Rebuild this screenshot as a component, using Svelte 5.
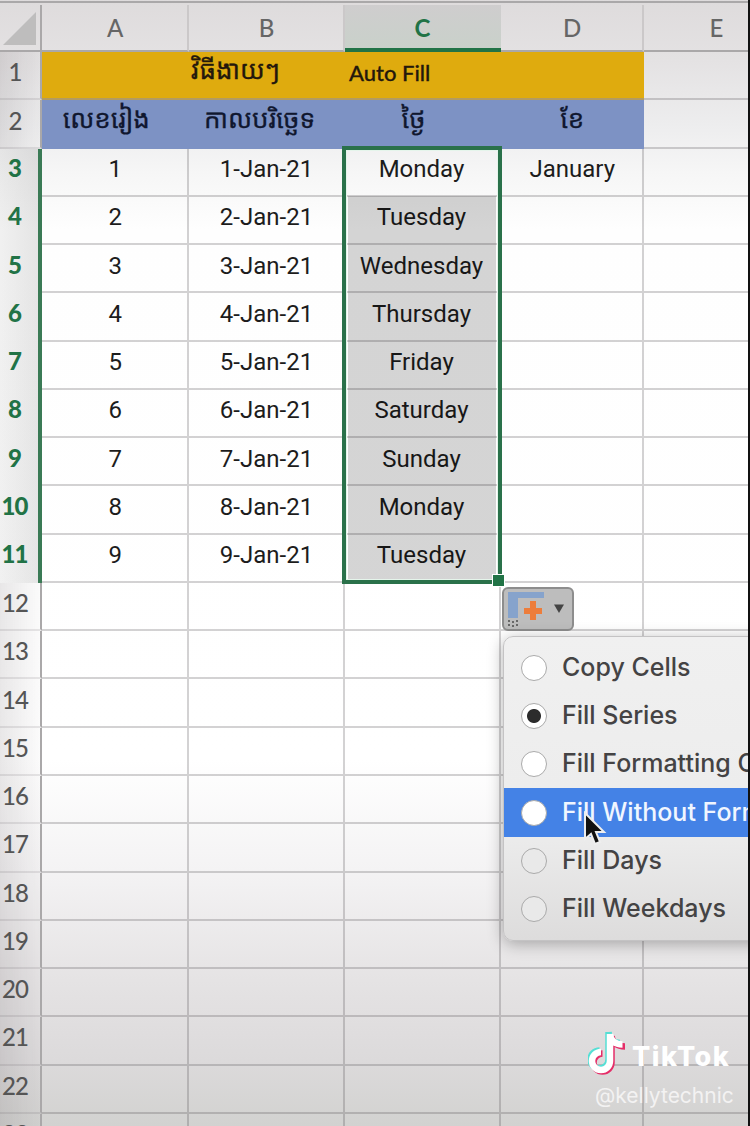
<script lang="ts">
  const columns = ['A', 'B', 'C', 'D', 'E'];
  const days = [
    'Monday',
    'Tuesday',
    'Wednesday',
    'Thursday',
    'Friday',
    'Saturday',
    'Sunday',
    'Monday',
    'Tuesday'
  ];
  const headings = ['លេខរៀង', 'កាលបរិច្ឆេទ', 'ថ្ងៃ', 'ខែ'];

  // rows 3 to 23, the last one is cut off by the window
  const rows = Array.from({ length: 21 }, (_, i) => ({
    number: i + 3,
    selected: i < 9,
    cells: i < 9 ? [`${i + 1}`, `${i + 1}-Jan-21`, days[i], i === 0 ? 'January' : ''] : ['', '', '', '']
  }));

  const options = [
    'Copy Cells',
    'Fill Series',
    'Fill Formatting Only',
    'Fill Without Formatting',
    'Fill Days',
    'Fill Weekdays'
  ];
  let chosen = $state('Fill Series');
  let hovered = $state('Fill Without Formatting');
</script>

<main class="window">
  <div class="sheet">
    <div class="row head">
      <div class="corner">
        <svg width="34" height="34" viewBox="0 0 34 34"><path d="M34 0V33H1Z" fill="#bebdbd" /></svg>
      </div>
      {#each columns as column}
        <div class="column" class:active={column === 'C'}>{column}</div>
      {/each}
    </div>

    <div class="row">
      <div class="number">1</div>
      <div class="title">
        <span class="khmer">វិធីងាយៗ</span>
        <span class="latin">Auto Fill</span>
      </div>
      <div class="cell"></div>
    </div>

    <div class="row">
      <div class="number">2</div>
      {#each headings as heading}
        <div class="cell heading khmer">{heading}</div>
      {/each}
      <div class="cell"></div>
    </div>

    {#each rows as row}
      <div class="row">
        <div class="number" class:selected={row.selected}>{row.number}</div>
        {#each row.cells as cell, i}
          <div class="cell" class:day={i === 2}>{cell}</div>
        {/each}
        <div class="cell"></div>
      </div>
    {/each}
  </div>

  <div class="selection">
    <div class="shade"></div>
    <div class="handle"></div>
  </div>

  <button class="fill-button" aria-label="Auto fill options">
    <svg width="68" height="40" viewBox="0 0 68 40">
      <path d="M4 3H40V9H14V29H4Z" fill="#86a3cc" />
      <path d="M5 31V37M9 32V34M9 36V38M13 31V33M13 35V37" stroke="#686868" stroke-width="2" stroke-dasharray="2 2" />
      <path d="M26 12H32V19H38V25H32V31H26V25H20V19H26Z" fill="#ed7d3b" />
      <path d="M50 15.500H60L55 24Z" fill="#444" />
    </svg>
  </button>

  <div class="menu">
    {#each options as option}
      <!-- svelte-ignore a11y_no_static_element_interactions, a11y_click_events_have_key_events, a11y_mouse_events_have_key_events -->
      <div
        class="option"
        class:hovered={hovered === option}
        onmouseover={() => (hovered = option)}
        onclick={() => (chosen = option)}
      >
        <span class="radio" class:checked={chosen === option}></span>
        <span>{option}</span>
      </div>
    {/each}
  </div>

  <svg class="cursor" width="24" height="36" viewBox="0 0 24 36">
    <path d="M2 2V28L8 23L12 33L17 31L13 21H21Z" fill="#111" stroke="#eee" stroke-width="2" />
  </svg>

  <div class="watermark">
    <div class="brand">
      <svg width="40" height="44" viewBox="0 0 40 44">
        <g fill="none" stroke-width="6.500">
          <path d="M20.500 1V28.500A9 9 0 1 1 11.500 19.500M20.500 1C21 7 25 12 32 12" stroke="#55dfd5" />
          <path d="M23.500 5V31.500A9 9 0 1 1 14.500 22.500M23.500 5C24 11 29 15.500 37 15.500" stroke="#e52d68" />
          <path d="M22 3V30A9 9 0 1 1 13 21M22 3C22.500 9 27 13.500 34.500 13.500" stroke="#fff" />
        </g>
      </svg>
      <span>TikTok</span>
    </div>
    <div class="account">@kellytechnic</div>
  </div>
</main>

<style>
  :global(body) {
    overflow: hidden;
  }

  .window {
    position: relative;
    box-sizing: border-box;
    width: 750px;
    height: 1126px;
    overflow: hidden;
    border-right: 2px solid #111;
    background: linear-gradient(
      #dedbdc 0,
      #e4e2e3 60px,
      #ededee 125px,
      #f6f6f6 172px,
      #fefefe 230px,
      #fff 760px,
      #f4f3f4 870px,
      #e5e3e4 980px,
      #dcdadb 1060px,
      #d2d2d0 1126px
    );
    color: #1c1c1c;
    font-family: Roboto, 'Liberation Sans', sans-serif;
  }

  .sheet {
    width: 750px;
    padding-top: 2px;
    border-top: 2px solid #aaa8a9;
    margin-top: 1px;
  }

  .row {
    display: grid;
    grid-template-columns: 42px 146.5px 156px 156px 143.5px 106px;
    height: 48.27px;
  }

  .head {
    height: 47px;
  }

  .corner,
  .column,
  .number,
  .cell {
    box-sizing: border-box;
    border-right: 2px solid rgba(70, 65, 70, 0.24);
    border-bottom: 2px solid rgba(70, 65, 70, 0.24);
  }

  .corner {
    padding: 7px 0 0 2px;
    border-color: #aaa8a9;
  }

  .column {
    display: flex;
    align-items: center;
    justify-content: center;
    padding: 0 0 1px 2px;
    border-right-color: #cbc8c9;
    border-bottom-color: #aaa8a9;
    color: #666;
    font: 500 24px Lato, sans-serif;
  }

  .column:last-child {
    padding-left: 41px;
  }

  .column.active {
    padding: 1px 0 0;
    border-right: 0;
    border-bottom: 4px solid #217346;
    background: linear-gradient(#cfcdce, #c9d1ca);
    color: #217346;
    font-weight: 700;
  }

  .number {
    display: flex;
    align-items: center;
    justify-content: center;
    padding: 0 10px 7px 0;
    border-right-color: #aaa8a9;
    border-bottom-color: rgba(70, 65, 70, 0.12);
    background: linear-gradient(90deg, rgba(70, 60, 65, 0.12), rgba(70, 60, 65, 0.02));
    color: #555;
    font: 500 24px Lato, sans-serif;
    letter-spacing: -1px;
  }

  .number.selected {
    padding: 0 9px 10px 0;
    border-right: 4px solid #3a7a55;
    border-bottom: 0;
    background: linear-gradient(90deg, rgba(60, 60, 60, 0.07), rgba(60, 60, 60, 0.13));
    color: #217346;
    font-weight: 900;
  }

  .cell {
    display: flex;
    align-items: center;
    justify-content: center;
    padding: 0 0 5px 2px;
    font-size: 24px;
    white-space: nowrap;
  }

  .day {
    padding-left: 0;
  }

  .title {
    display: flex;
    grid-column: 2 / 6;
    align-items: center;
    padding: 0 0 6px 149px;
    border-bottom: 2px solid #b29b62;
    background: #dfab0e;
    color: #24180c;
  }

  .title .khmer {
    width: 158px;
    line-height: 30px;
    padding-bottom: 6px;
  }

  .title .latin {
    font: 500 22px Lato, sans-serif;
    -webkit-text-stroke: 0.3px #24180c;
  }

  .khmer {
    font-family: 'Khmer OS', 'Noto Sans Khmer', 'Noto Sans', sans-serif;
    font-size: 26px;
    white-space: nowrap;
    -webkit-text-stroke: 0.3px currentColor;
  }

  .heading {
    padding: 0 14px 11px 0;
    border-right: 0;
    border-color: #7d92c4;
    background: #7d92c4;
    color: #10172f;
  }

  .heading:nth-child(2) {
    padding-right: 18px;
  }

  .heading:nth-child(4) {
    padding-right: 18px;
  }

  .heading:nth-child(5) {
    padding-right: 0;
  }

  .selection {
    position: absolute;
    top: 146px;
    left: 342px;
    box-sizing: border-box;
    width: 160px;
    height: 438px;
    padding: 46px 2px 1px 2px;
    border: 4px solid #2a714a;
    box-shadow: inset 0 0 0 1px #e5f5eb;
  }

  .shade {
    height: 100%;
    background: rgba(0, 0, 0, 0.165);
  }

  .handle {
    position: absolute;
    right: -7px;
    bottom: -7px;
    width: 11px;
    height: 11px;
    border: 1px solid #fff;
    background: #217346;
  }

  .fill-button {
    position: absolute;
    top: 587px;
    left: 502px;
    box-sizing: border-box;
    width: 72px;
    height: 44px;
    padding: 0;
    border: 2px solid #8d8d8d;
    border-radius: 6px;
    background: #bdbdbd;
  }

  .fill-button svg {
    display: block;
  }

  .menu {
    position: absolute;
    top: 636px;
    left: 503px;
    box-sizing: border-box;
    width: 340px;
    height: 305px;
    padding: 6.5px 0;
    border: 1px solid #c4c3c4;
    border-radius: 10px;
    background: linear-gradient(#f0f0f0, #ececec 65%, #dddcdc);
    box-shadow: 0 3px 16px rgba(0, 0, 0, 0.3);
    color: #444344;
    font: 500 25px Inter, sans-serif;
  }

  .option {
    display: flex;
    align-items: center;
    gap: 15px;
    height: 48.3px;
    padding-left: 17px;
    white-space: nowrap;
  }

  .option.hovered {
    background: #4482e6;
    color: #f0f6ff;
  }

  .option > span:last-child {
    padding-bottom: 2px;
  }

  .radio {
    box-sizing: border-box;
    width: 26px;
    height: 26px;
    border: 1.5px solid #aaa;
    border-radius: 50%;
    background: #fff;
  }

  .option:nth-child(n + 5) .radio {
    background: #e9e9e9;
  }

  .radio.checked {
    background: radial-gradient(circle, #2c2c2c 6.5px, #fff 7.5px);
  }

  .cursor {
    position: absolute;
    top: 811px;
    left: 583px;
  }

  .watermark {
    position: absolute;
    top: 1031px;
    left: 588px;
    color: #fff;
  }

  .brand {
    display: flex;
    align-items: center;
    gap: 4px;
    font: 800 27px Inter, sans-serif;
    letter-spacing: 1.5px;
  }

  .brand span {
    padding-top: 6px;
  }

  .account {
    padding: 8px 0 0 7px;
    color: #f3f2f2;
    font: 21px Inter, sans-serif;
  }
</style>
